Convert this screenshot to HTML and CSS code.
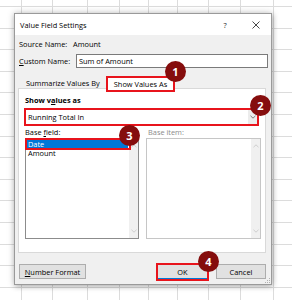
FILE: index.html
```html
<!DOCTYPE html>
<html>
<head>
<meta charset="utf-8">
<title>Value Field Settings</title>
<link rel="stylesheet" href="styles.css">
</head>
<body>
<div class="dialog">
  <div class="titlebar">
    <span class="title">Value Field Settings</span>
    <span class="help">?</span>
    <span class="close"><svg width="8" height="8" viewBox="0 0 8 8"><path d="M0.5 0.5L7.5 7.5M7.5 0.5L0.5 7.5" stroke="#333" stroke-width="0.9" fill="none"/></svg></span>
  </div>
  <div class="content">
    <div class="row source"><span class="lbl">Source Name:</span><span class="val">Amount</span></div>
    <div class="row custom"><span class="lbl"><u>C</u>ustom Name:</span><div class="input">Sum of Amount</div></div>
    <div class="tabs">
      <div class="tab">Summarize Values By</div>
      <div class="tab active mark">Show Values As</div>
    </div>
    <div class="panel">
      <div class="svlabel">Show v<u>a</u>lues as</div>
      <div class="combo mark">
        <span class="combo-text">Running Total In</span>
        <span class="combo-btn"><svg width="6" height="4" viewBox="0 0 6 4"><path d="M0.5 0.8L3 3.2L5.5 0.8" stroke="#606060" stroke-width="0.8" fill="none"/></svg></span>
      </div>
      <div class="cols">
        <div class="col">
          <div class="collabel">Base <u>f</u>ield:</div>
          <div class="list">
            <div class="items">
              <div class="item selected mark">Date</div>
              <div class="item">Amount</div>
            </div>
            <div class="sbar">
              <svg width="6" height="4" viewBox="0 0 6 4"><path d="M0.5 3.2L3 0.8L5.5 3.2" stroke="#c4c4c4" stroke-width="0.8" fill="none"/></svg>
              <svg width="6" height="4" viewBox="0 0 6 4"><path d="M0.5 0.8L3 3.2L5.5 0.8" stroke="#c4c4c4" stroke-width="0.8" fill="none"/></svg>
            </div>
          </div>
        </div>
        <div class="col">
          <div class="collabel disabled">Base item:</div>
          <div class="list off">
            <div class="items"></div>
            <div class="sbar">
              <svg width="6" height="4" viewBox="0 0 6 4"><path d="M0.5 3.2L3 0.8L5.5 3.2" stroke="#c4c4c4" stroke-width="0.8" fill="none"/></svg>
              <svg width="6" height="4" viewBox="0 0 6 4"><path d="M0.5 0.8L3 3.2L5.5 0.8" stroke="#c4c4c4" stroke-width="0.8" fill="none"/></svg>
            </div>
          </div>
        </div>
      </div>
    </div>
    <div class="buttons">
      <div class="btn numfmt"><span><u>N</u>umber Format</span></div>
      <div class="spacer"></div>
      <div class="btn ok mark">OK</div>
      <div class="btn cancel">Cancel</div>
    </div>
  </div>
  <span class="badge b1">1</span>
  <span class="badge b2">2</span>
  <span class="badge b3">3</span>
  <span class="badge b4">4</span>
  <svg class="grip" width="7" height="7" viewBox="0 0 7 7"><g fill="#b0b0b0"><rect x="5" y="1" width="1" height="1"/><rect x="3" y="3" width="1" height="1"/><rect x="5" y="3" width="1" height="1"/><rect x="1" y="5" width="1" height="1"/><rect x="3" y="5" width="1" height="1"/><rect x="5" y="5" width="1" height="1"/></g></svg>
</div>
</body>
</html>
```
FILE: styles.css
```css
* { box-sizing: border-box; }
html { margin: 0; background: #fff; }
body {
  margin: 0;
  width: 292px;
  height: 300px;
  overflow: hidden;
  padding: 13px 0 0 14px;
  font-family: "Open Sans", "Noto Sans", sans-serif;
  font-size: 7.4px;
  color: #000;
  background-color: #fff;
  background-image:
    linear-gradient(to right,
      transparent 21px, #dcdcdc 21px 22px,
      transparent 22px 52px, #dcdcdc 52px 53px,
      transparent 53px 87px, #dcdcdc 87px 88px,
      transparent 88px 119px, #dcdcdc 119px 120px,
      transparent 120px 148px, #dcdcdc 148px 149px,
      transparent 149px 177px, #dcdcdc 177px 178px,
      transparent 178px 208px, #dcdcdc 208px 209px,
      transparent 209px 240px, #dcdcdc 240px 241px,
      transparent 241px 273px, #dcdcdc 273px 274px,
      transparent 274px),
    repeating-linear-gradient(to bottom, #dcdcdc 0 1px, transparent 1px 21.6px);
  background-position: 0 0, 0 6px;
}

.dialog {
  position: relative;
  width: 258px;
  height: 272px;
  border: 1px solid #9a9a9a;
  background: #f0f0f0;
  box-shadow: 0 0 7px rgba(0, 0, 0, 0.22), 1px 2px 5px rgba(0, 0, 0, 0.18);
  display: flex;
  flex-direction: column;
}

.titlebar {
  height: 21px;
  flex: none;
  background: #fff;
  display: flex;
  align-items: center;
  padding-left: 5px;
}
.title { flex: 1; font-size: 7.4px; }
.help { width: 26px; text-align: center; font-size: 7.4px; color: #222; }
.close {
  width: 26px;
  margin-left: 5px;
  margin-right: 2px;
  display: flex;
  justify-content: center;
  align-items: center;
}
.close svg { display: block; }

.content {
  flex: 1;
  display: flex;
  flex-direction: column;
  padding: 0 3px;
}

.row { display: flex; align-items: center; height: 14px; padding-left: 1px; }
.source { margin-top: 2px; }
.source .lbl { width: 54px; }
.custom { margin-top: 3px; }
.custom .lbl { width: 57px; }
.input {
  flex: 1;
  height: 14px;
  border: 1px solid #7a7a7a;
  background: #fff;
  padding-left: 2px;
  display: flex;
  align-items: center;
}

.tabs {
  display: flex;
  height: 14px;
  margin-top: 8px;
  margin-bottom: -2px;
  position: relative;
  z-index: 1;
  padding-left: 1px;
}
.tab {
  height: 14px;
  padding: 0 7px;
  display: flex;
  align-items: center;
  white-space: nowrap;
}
.tab:first-child { width: 88px; }
.tab.active {
  width: 67px;
  padding: 0 2px;
  justify-content: center;
  background: #fff;
  border: 1px solid #d9d9d9;
  border-bottom: none;
}

.mark { position: relative; }
.mark::after {
  content: "";
  position: absolute;
  border: 2px solid #e8141c;
  pointer-events: none;
}
.tab.mark::after { left: -2px; right: -2px; top: -1px; bottom: -2px; }

.panel {
  height: 165px;
  margin-right: 2px;
  background: #fff;
  border: 1px solid #d9d9d9;
  padding: 0 4px 0 6px;
}
.svlabel {
  height: 10px;
  margin-top: 6px;
  display: flex;
  align-items: center;
  font-weight: bold;
}
.combo {
  height: 16px;
  margin-top: 4px;
  width: 233px;
  border: 1px solid #7a7a7a;
  background: #fff;
  display: flex;
  align-items: stretch;
}
.combo.mark::after { left: -2px; right: -2px; top: -2px; bottom: -2px; }
.combo-text { flex: 1; padding-left: 2px; display: flex; align-items: center; }
.combo-btn {
  width: 9px;
  background: #ececec;
  display: flex;
  align-items: center;
  justify-content: center;
}
.combo-btn svg, .sbar svg { display: block; }

.cols { display: flex; gap: 7px; margin-top: 2px; }
.col { display: flex; flex-direction: column; }
.col:first-child { width: 114px; }
.col:last-child { width: 115px; }
.collabel { height: 10px; display: flex; align-items: center; white-space: pre; }
.collabel.disabled { color: #8c8c8c; padding-left: 2px; }
.list {
  margin-top: 1px;
  height: 101px;
  border: 1px solid #8c8c8c;
  background: #fff;
  display: flex;
}
.list.off { border-color: #c6c6c6; }
.items { flex: 1; padding: 0 1px; }
.item {
  height: 9.5px;
  display: flex;
  align-items: center;
  padding-left: 1px;
}
.item.selected { background: #0078d7; color: #fff; }
.item.mark::after { left: -2px; right: -3px; top: -1px; bottom: -1px; }
.sbar {
  width: 9px;
  background: #f0f0f0;
  display: flex;
  flex-direction: column;
  justify-content: space-between;
  align-items: center;
  padding: 5px 0;
}

.buttons {
  display: flex;
  height: 15px;
  margin-top: 11px;
  padding-left: 1px;
  padding-right: 2px;
}
.btn {
  height: 15px;
  background: #e1e1e1;
  border: 1px solid #adadad;
  display: flex;
  align-items: center;
  justify-content: center;
}
.numfmt { width: 67px; }
.spacer { flex: 1; }
.ok { width: 51px; border-color: #0078d7; }
.ok.mark::after { left: -2px; right: -2px; top: -2px; bottom: -3px; }
.cancel { width: 50px; margin-left: 8px; }

.badge {
  position: absolute;
  z-index: 5;
  width: 21px;
  height: 21px;
  border-radius: 50%;
  background: #850d0d;
  color: #fff;
  font-weight: bold;
  font-size: 11px;
  display: flex;
  align-items: center;
  justify-content: center;
}
.b1 { left: 150px; top: 47px; }
.b2 { left: 235px; top: 81px; }
.b3 { left: 104px; top: 111px; }
.b4 { left: 183px; top: 237px; }

.grip { position: absolute; right: 0; bottom: 0; }
```
